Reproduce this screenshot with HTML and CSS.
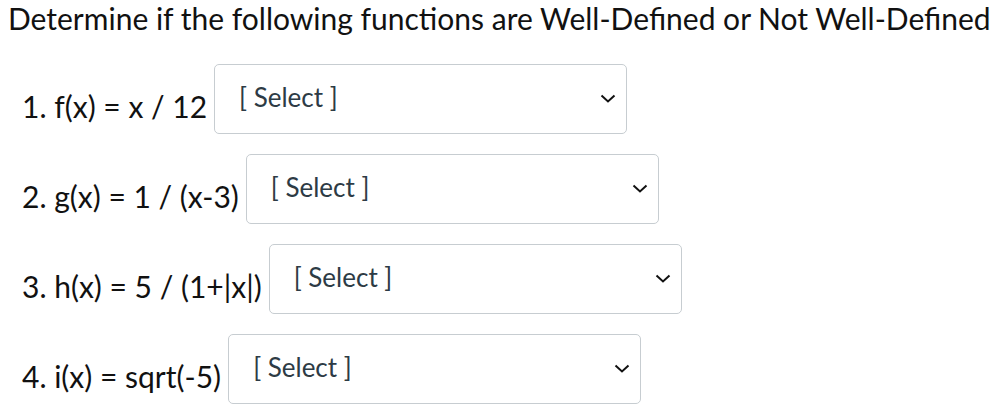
FILE: index.html
```html
<!DOCTYPE html>
<html>
<head>
<meta charset="utf-8">
<link rel="stylesheet" href="styles.css">
</head>
<body>
<div class="title">Determine if the following functions are Well-Defined or Not Well-Defined</div>
<div class="list">
  <div class="row">
    <span class="label">1. f(x) = x / 12</span>
    <div class="select"><span class="sel-text">[ Select ]</span><svg class="chev" width="16" height="10" viewBox="0 0 16 10"><path d="M1.5 1.5 L8 7.5 L14.5 1.5" fill="none" stroke="#111" stroke-width="2"/></svg></div>
  </div>
  <div class="row">
    <span class="label">2. g(x) = 1 / (x-3)</span>
    <div class="select"><span class="sel-text">[ Select ]</span><svg class="chev" width="16" height="10" viewBox="0 0 16 10"><path d="M1.5 1.5 L8 7.5 L14.5 1.5" fill="none" stroke="#111" stroke-width="2"/></svg></div>
  </div>
  <div class="row">
    <span class="label">3. h(x) = 5 / (1+|x|)</span>
    <div class="select"><span class="sel-text">[ Select ]</span><svg class="chev" width="16" height="10" viewBox="0 0 16 10"><path d="M1.5 1.5 L8 7.5 L14.5 1.5" fill="none" stroke="#111" stroke-width="2"/></svg></div>
  </div>
  <div class="row">
    <span class="label">4. i(x) = sqrt(-5)</span>
    <div class="select"><span class="sel-text">[ Select ]</span><svg class="chev" width="16" height="10" viewBox="0 0 16 10"><path d="M1.5 1.5 L8 7.5 L14.5 1.5" fill="none" stroke="#111" stroke-width="2"/></svg></div>
  </div>
</div>
</body>
</html>
```
FILE: styles.css
```css
html, body {
  margin: 0;
  background: #fff;
}
body {
  padding: 0 8px;
  font-family: Lato, "Noto Sans", sans-serif;
  color: #111;
}
.title {
  font-size: 30px;
  line-height: 1.2;
  white-space: nowrap;
}
.list {
  display: flex;
  flex-direction: column;
  gap: 20px;
  margin-top: 28px;
  padding-left: 14px;
}
.row {
  display: flex;
  align-items: center;
  gap: 7px;
}
.label {
  font-size: 30px;
  line-height: 34px;
  padding-top: 14px;
  white-space: nowrap;
}
.select {
  box-sizing: border-box;
  width: 413px;
  height: 70px;
  border: 1px solid #c7cdd1;
  border-radius: 5px;
  display: flex;
  align-items: center;
  justify-content: space-between;
  padding: 0 10px 0 24px;
  color: #2d3b45;
}
.sel-text {
  font-size: 26px;
  line-height: 30px;
  margin-top: -4px;
}
.chev {
  display: block;
}
```
